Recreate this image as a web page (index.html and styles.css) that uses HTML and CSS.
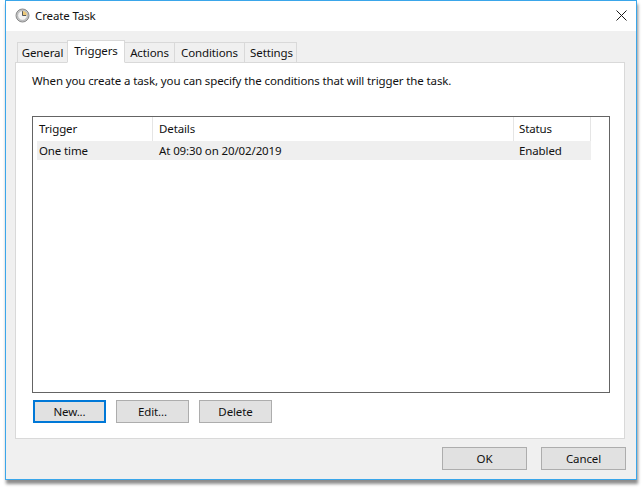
FILE: index.html
```html
<!DOCTYPE html>
<html lang="en">
<head>
<meta charset="utf-8">
<title>Create Task</title>
<link rel="stylesheet" href="styles.css">
</head>
<body>
<div class="window">
  <header class="titlebar">
    <svg class="app-icon" width="16" height="16" viewBox="0 0 16 16">
      <circle cx="7.5" cy="7.5" r="6.5" fill="#c4c6c8" stroke="#8a8a8a"/>
      <circle cx="7.5" cy="7.5" r="4.8" fill="#f4f4f4" stroke="#a0a0a0" stroke-width=".6"/>
      <path d="M7.5 7.5V3a4.5 4.5 0 0 1 4.5 4.5Z" fill="#ecc878"/>
      <path d="M7.5 3.2v4.3h3.6" fill="none" stroke="#55585c" stroke-width="1"/>
    </svg>
    <span class="title">Create Task</span>
    <svg class="close" width="11" height="11" viewBox="0 0 11 11">
      <path d="M.5.5l10 10M10.5.5l-10 10" stroke="#1a1a1a" stroke-width="1" fill="none"/>
    </svg>
  </header>
  <div class="body">
    <nav class="tabs">
      <div class="tab tab-general">General</div>
      <div class="tab tab-active">Triggers</div>
      <div class="tab tab-actions">Actions</div>
      <div class="tab tab-conditions">Conditions</div>
      <div class="tab tab-settings">Settings</div>
    </nav>
    <section class="panel">
      <p class="intro">When you create a task, you can specify the conditions that will trigger the task.</p>
      <div class="list">
        <div class="row head">
          <div class="col col-trigger">Trigger</div>
          <div class="col col-details">Details</div>
          <div class="col col-status">Status</div>
        </div>
        <div class="row selected">
          <div class="col col-trigger">One time</div>
          <div class="col col-details">At 09:30 on 20/02/2019</div>
          <div class="col col-status">Enabled</div>
        </div>
      </div>
      <div class="list-actions">
        <button class="btn btn-default">New...</button>
        <button class="btn">Edit...</button>
        <button class="btn">Delete</button>
      </div>
    </section>
    <footer class="dialog-actions">
      <button class="btn btn-wide">OK</button>
      <button class="btn btn-wide">Cancel</button>
    </footer>
  </div>
</div>
</body>
</html>
```

FILE: styles.css
```css
* { box-sizing: border-box; }
html, body { margin: 0; background: #fff; }
body {
  font-family: "Noto Sans", "Open Sans", sans-serif;
  font-size: 11.5px;
  letter-spacing: -0.12px;
  color: #111;
  height: 490px;
  overflow: hidden;
}
.window {
  width: 632px;
  height: 480px;
  margin-left: 5px;
  border: 1px solid #3aa6ea;
  background: #f0f0f0;
  box-shadow: 1px 4px 3px rgba(0,0,0,.45);
  display: flex;
  flex-direction: column;
}
.titlebar {
  height: 30px;
  background: #fff;
  display: flex;
  align-items: center;
  padding: 0 9px;
  flex: none;
}
.app-icon { flex: none; }
.title { margin: 0 0 2px 4px; }
.close { margin-left: auto; margin-top: -1px; }
.body {
  flex: 1;
  display: flex;
  flex-direction: column;
  padding: 9px 11px 8px 9px;
}
.tabs {
  display: flex;
  height: 23px;
  padding: 0 0 0 2px;
  align-items: flex-end;
  position: relative;
  z-index: 1;
  margin-bottom: -1px;
}
.tab {
  height: 21px;
  background: #f0f0f0;
  border: 1px solid #d9d9d9;
  border-left-width: 0;
  line-height: 19px;
  text-align: center;
  flex: none;
}
.tab-general { width: 50px; border-left-width: 1px; border-right-width: 0; }
.tab-active {
  width: 58px;
  height: 23px;
  background: #fff;
  border-left-width: 1px;
  border-bottom-color: #fff;
  line-height: 19px;
}
.tab-actions { width: 50px; }
.tab-conditions { width: 70px; }
.tab-settings { width: 52px; padding-left: 2px; }
.panel {
  height: 377px;
  background: #fff;
  border: 1px solid #d9d9d9;
  padding: 0 14px 0 16px;
  display: flex;
  flex-direction: column;
  flex: none;
}
.intro { margin: 10px 0 0; line-height: 16px; height: 43px; }
.list {
  height: 277px;
  border: 1px solid #646464;
  padding-left: 4px;
  flex: none;
}
.row { display: flex; width: 554px; }
.head { height: 24px; }
.head .col { border-right: 1px solid #e5e5e5; line-height: 23px; }
.selected { height: 19px; background: #efefef; line-height: 19px; }
.col { flex: none; padding-left: 2px; white-space: nowrap; }
.col-trigger { width: 116px; }
.col-details { width: 361px; padding-left: 6px; }
.col-status { width: 77px; padding-left: 5px; }
.list-actions { display: flex; gap: 10px; margin-top: 7px; padding-left: 1px; }
.btn {
  width: 73px;
  height: 23px;
  padding: 0;
  background: #e1e1e1;
  border: 1px solid #adadad;
  font: inherit;
  letter-spacing: inherit;
  color: #111;
  border-radius: 0;
}
.btn-default { border: 2px solid #0078d7; }
.dialog-actions {
  display: flex;
  justify-content: flex-end;
  gap: 14px;
  margin-top: 8px;
  margin-right: -1px;
}
.btn-wide { width: 85px; }
```
